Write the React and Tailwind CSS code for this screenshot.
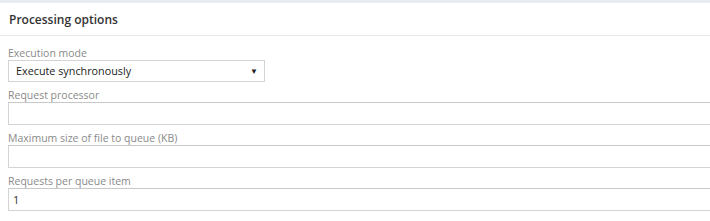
export default function App() {
  const font = { fontFamily: '"Open Sans", "Noto Sans", sans-serif' };
  const Field = ({ label, value }) => (
    <div className="mt-[6px]">
      <div className="h-[14px] text-[10.5px] leading-[14px] text-[#8a8a8a]">{label}</div>
      <div className="h-[23px] w-[720px] border border-[#d4d4d4] border-t-[#c8c8c8] bg-white px-[4px] text-[11px] leading-[21px] text-[#333]">
        {value}
      </div>
    </div>
  );
  return (
    <div className="w-[710px] h-[221px] bg-white overflow-hidden" style={font}>
      <div className="h-[3px] bg-[#e8ebf1]" />
      <div className="h-[33px] border-b border-[#e8e8e8] pl-[9px] flex items-center">
        <span className="text-[12px] font-semibold text-[#333] leading-none mt-[2px]">Processing options</span>
      </div>
      <div className="pl-[8px]">
        <div className="mt-[10px]">
          <div className="h-[14px] text-[10.5px] leading-[14px] text-[#8a8a8a]">Execution mode</div>
          <div className="h-[22px] w-[257px] border border-[#d4d4d4] bg-white pl-[7px] pr-[6px] flex items-center justify-between text-[10.8px] text-[#222]">
            <span>Execute synchronously</span>
            <span className="text-[8px] text-[#222]">▼</span>
          </div>
        </div>
        <Field label="Request processor" value="" />
        <Field label="Maximum size of file to queue (KB)" value="" />
        <Field label="Requests per queue item" value="1" />
      </div>
    </div>
  );
}
